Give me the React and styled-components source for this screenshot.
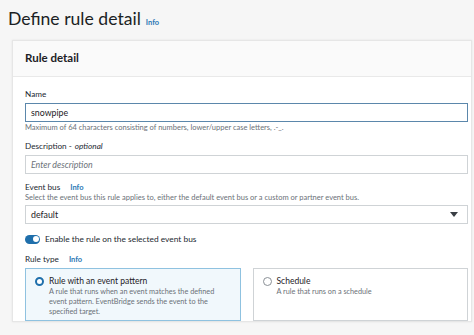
import React from 'react'
import styled, { createGlobalStyle } from 'styled-components'

const Global = createGlobalStyle`
    html, body {
        margin: 0;
        padding: 0;
        background: #f6f6f6;
        font-family: Lato, "Liberation Sans", sans-serif;
        color: #16191f;
    }
    * { box-sizing: border-box; }
`;

const Page = styled.div`
    width: 474px;
    height: 335px;
    overflow: hidden;
    padding: 6px 0 0 12px;
`;

const Heading = styled.div`
    display: flex;
    align-items: baseline;
    gap: 5px;
    margin-left: -4px;
    height: 34px;
    padding-top: 2px;
`;

const H1 = styled.h1`
    margin: 0;
    font-size: 17.6px;
    font-weight: 400;
    color: #1b1f24;
`;

const Info = styled.span`
    font-size: 7.5px;
    font-weight: 700;
    color: #2a78b5;
    margin-left: ${p => p.$gap || 0}px;
`;

const Card = styled.div`
    background: #fff;
    border: 1px solid #e6e6e6;
    box-shadow: 0 0 2px rgba(0, 0, 0, 0.08);
    width: 460px;
`;

const CardHeader = styled.div`
    background: #fafafa;
    border-bottom: 1px solid #e9e9e9;
    padding: 10px 12px 0;
    height: 36px;
    font-size: 11.5px;
    font-weight: 700;
    color: #1d2126;
`;

const CardBody = styled.div`
    padding: 11px 3px 0 12px;
    display: flex;
    flex-direction: column;
`;

const Label = styled.div`
    display: flex;
    align-items: center;
    font-size: 8.2px;
    color: #222831;
    height: 12px;
    margin-top: ${p => p.$top || 0}px;

    em {
        font-style: italic;
        margin-left: 3px;
    }
`;

const Hint = styled.div`
    font-size: 7.5px;
    color: #6b7178;
    height: ${p => p.$h || 10}px;
    line-height: ${p => p.$h || 10}px;
    margin-top: ${p => p.$top || 0}px;
`;

const Field = styled.div`
    height: 19px;
    margin-top: 3px;
    border: 1px solid ${p => (p.$focus ? '#5b87ab' : '#cfd3d6')};
    background: #fff;
    display: flex;
    align-items: center;
    justify-content: space-between;
    padding: 0 9px 0 5px;
    font-size: 8.8px;
    font-style: ${p => (p.$placeholder ? 'italic' : 'normal')};
    color: ${p => (p.$placeholder ? '#6b7178' : '#1d2126')};
`;

const Caret = styled.span`
    width: 0;
    height: 0;
    border-left: 4px solid transparent;
    border-right: 4px solid transparent;
    border-top: 5px solid #3a3f45;
`;

const ToggleRow = styled.div`
    display: flex;
    align-items: center;
    gap: 5px;
    margin-top: 8px;
    height: 14px;
    font-size: 8.4px;
    color: #222831;
`;

const Toggle = styled.span`
    width: 15px;
    height: 9px;
    border-radius: 5px;
    background: #1f6fab;
    position: relative;

    &::after {
        content: '';
        position: absolute;
        right: 1.5px;
        top: 1.5px;
        width: 6px;
        height: 6px;
        border-radius: 50%;
        background: #fff;
    }
`;

const Tiles = styled.div`
    display: grid;
    grid-template-columns: 1fr 1fr;
    gap: 12px;
    margin-top: 3px;
`;

const Tile = styled.div`
    height: 53px;
    border: 1px solid ${p => (p.$selected ? '#8fc2e0' : '#cfd3d6')};
    background: ${p => (p.$selected ? '#f1f8fc' : '#fff')};
    padding: 6px 8px 0 9px;
    display: flex;
    gap: 5px;
`;

const Radio = styled.span`
    flex: none;
    width: 9px;
    height: 9px;
    margin-top: 2px;
    border-radius: 50%;
    border: ${p => (p.$on ? '2.5px solid #1f6fab' : '1px solid #8a9096')};
    background: #fff;
`;

const TileText = styled.div`
    display: flex;
    flex-direction: column;
`;

const TileTitle = styled.div`
    font-size: 8.5px;
    color: #1d2126;
    line-height: 12px;
`;

const TileDesc = styled.div`
    font-size: 7.3px;
    color: #6b7178;
    line-height: 10px;
`;

export default function App() {
    return (
        <Page>
            <Global />
            <Heading>
                <H1>Define rule detail</H1>
                <Info>Info</Info>
            </Heading>
            <Card>
                <CardHeader>Rule detail</CardHeader>
                <CardBody>
                    <Label>Name</Label>
                    <Field $focus>snowpipe</Field>
                    <Hint $top={1}>Maximum of 64 characters consisting of numbers, lower/upper case letters, .-_.</Hint>
                    <Label $top={7}>Description -<em>optional</em></Label>
                    <Field $placeholder>Enter description</Field>
                    <Label $top={7}>Event bus<Info $gap={10}>Info</Info></Label>
                    <Hint $h={9}>Select the event bus this rule applies to, either the default event bus or a custom or partner event bus.</Hint>
                    <Field>
                        default
                        <Caret />
                    </Field>
                    <ToggleRow>
                        <Toggle />
                        Enable the rule on the selected event bus
                    </ToggleRow>
                    <Label $top={7}>Rule type<Info $gap={10}>Info</Info></Label>
                    <Tiles>
                        <Tile $selected>
                            <Radio $on />
                            <TileText>
                                <TileTitle>Rule with an event pattern</TileTitle>
                                <TileDesc>A rule that runs when an event matches the defined event pattern. EventBridge sends the event to the specified target.</TileDesc>
                            </TileText>
                        </Tile>
                        <Tile>
                            <Radio />
                            <TileText>
                                <TileTitle>Schedule</TileTitle>
                                <TileDesc>A rule that runs on a schedule</TileDesc>
                            </TileText>
                        </Tile>
                    </Tiles>
                </CardBody>
            </Card>
        </Page>
    )
}
